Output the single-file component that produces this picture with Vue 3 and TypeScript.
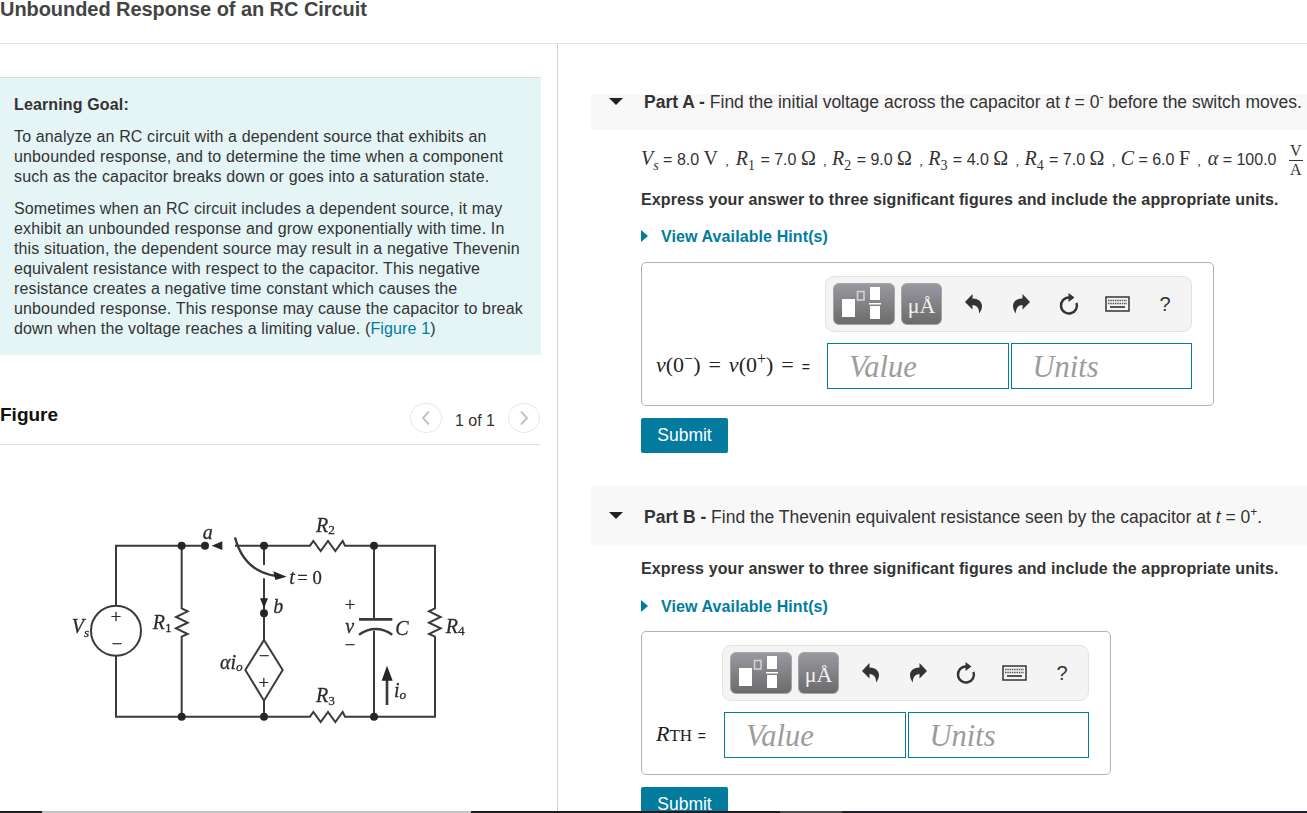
<script setup lang="ts">
interface Part { id: string; cls: string }
const parts: Part[] = [
  { id: 'A', cls: 'part-a' },
  { id: 'B', cls: 'part-b' },
]
</script>

<template>
  <div class="page">
    <header class="title-bar"><h1>Unbounded Response of an RC Circuit</h1></header>
    <main class="columns">
      <section class="left">
        <div class="goal">
          <h2>Learning Goal:</h2>
          <p>To analyze an RC circuit with a dependent source that exhibits an unbounded response, and to determine the time when a component such as the capacitor breaks down or goes into a saturation state.</p>
          <p>Sometimes when an RC circuit includes a dependent source, it may exhibit an unbounded response and grow exponentially with time. In this situation, the dependent source may result in a negative Thevenin equivalent resistance with respect to the capacitor. This negative resistance creates a negative time constant which causes the unbounded response. This response may cause the capacitor to break down when the voltage reaches a limiting value. (<span class="link">Figure 1</span>)</p>
        </div>
        <div class="fig-head">
          <h2>Figure</h2>
          <div class="pager">
            <span class="pg-btn"><svg width="10" height="16" viewBox="0 0 10 16"><path d="M8 1.5 2 8l6 6.5" fill="none" stroke="#c4c4c4" stroke-width="2"/></svg></span>
            <span class="pg-text">1 of 1</span>
            <span class="pg-btn"><svg width="10" height="16" viewBox="0 0 10 16"><path d="M2 1.5 8 8l-6 6.5" fill="none" stroke="#c4c4c4" stroke-width="2"/></svg></span>
          </div>
        </div>
        <div class="figure">
          <svg class="circuit" width="420" height="240" viewBox="0 0 1260 720">
            <g fill="none" stroke="#3a3a3a" stroke-width="6">
              <path d="M168 318V137H430M525 137H750l10-14 22 30 22-30 22 30 22-30 7 14H1125V325l-18 9 35 17-35 17 35 17-35 17 18 8V650H855l-7-14-22 30-22-30-22 30-22-30-10 14H168V468"/>
              <path d="M365 137V325l18 9-35 17 35 17-35 17 35 17-18 8V650"/>
              <path d="M612 137V195M612 235V420M612 602V650"/>
              <path d="M942 137V357M942 392V650"/>
              <circle cx="168" cy="392" r="75"/>
              <path d="M612 420 668 510 612 602 556 510Z"/>
              <path d="M525 112Q552 215 650 228" stroke-width="7"/>
              <path d="M897 358H997" stroke-width="8"/>
              <path d="M897 404Q947 370 997 404" stroke-width="7"/>
              <path d="M981 615V540" stroke-width="8"/>
            </g>
            <g fill="#262626">
              <circle cx="365" cy="137" r="12"/><circle cx="435" cy="137" r="12"/><circle cx="612" cy="137" r="12"/>
              <circle cx="942" cy="137" r="12"/><circle cx="612" cy="340" r="12"/><circle cx="365" cy="650" r="12"/>
              <circle cx="612" cy="650" r="12"/><circle cx="942" cy="650" r="12"/>
              <path d="M455 137 487 124V150Z"/>
              <path d="M600 295H624L612 325Z"/>
              <path d="M965 542 981 497 998 542Z"/>
              <path d="M680 230 640 214 646 240Z"/>
            </g>
            <g class="lbl">
              <text x="428" y="116">a</text>
              <text x="768" y="95">R<tspan class="sm" dy="8">2</tspan></text>
              <text x="768" y="607">R<tspan class="sm" dy="8">3</tspan></text>
              <text x="278" y="388">R<tspan class="sm" dy="8">1</tspan></text>
              <text x="1157" y="398">R<tspan class="sm" dy="8">4</tspan></text>
              <text x="35" y="398">V<tspan class="sm it" dy="12">s</tspan></text>
              <text x="688" y="252">t</text>
              <text x="640" y="340">b</text>
              <text x="856" y="398">v</text>
              <text x="1006" y="406">C</text>
              <text x="480" y="506">αi<tspan class="sm it" dy="8">o</tspan></text>
              <text x="1002" y="590">i<tspan class="sm it" dy="8">o</tspan></text>
            </g>
            <g class="sym">
              <text x="712" y="252">= 0</text>
              <text x="870" y="332" text-anchor="middle">+</text>
              <text x="870" y="454" text-anchor="middle">−</text>
              <text x="168" y="370" text-anchor="middle">+</text>
              <text x="171" y="450" text-anchor="middle">−</text>
              <text x="613" y="486" text-anchor="middle">−</text>
              <text x="611" y="566" text-anchor="middle">+</text>
            </g>
          </svg>
        </div>
      </section>

      <section class="right">
        <article v-for="part in parts" :key="part.id" :class="['part', part.cls]">
          <div class="part-head">
            <span class="caret"></span>
            <div class="part-title" v-if="part.id === 'A'"><b>Part A -</b> Find the initial voltage across the capacitor at <i>t</i> = 0<sup>-</sup> before the switch moves.</div>
            <div class="part-title" v-else><b>Part B -</b> Find the Thevenin equivalent resistance seen by the capacitor at <i>t</i> = 0<sup>+</sup>.</div>
          </div>
          <div class="part-body">
            <div class="params" v-if="part.id === 'A'">
              <span class="m"><i>V<sub>s</sub></i></span> = 8.0 <span class="m">V</span> <span class="c c-first">,</span>
              <span class="m"><i>R</i><sub>1</sub></span> = 7.0 <span class="m">Ω</span> <span class="c">,</span>
              <span class="m"><i>R</i><sub>2</sub></span> = 9.0 <span class="m">Ω</span> <span class="c">,</span>
              <span class="m"><i>R</i><sub>3</sub></span> = 4.0 <span class="m">Ω</span> <span class="c">,</span>
              <span class="m"><i>R</i><sub>4</sub></span> = 7.0 <span class="m">Ω</span> <span class="c">,</span>
              <span class="m"><i>C</i></span> = 6.0 <span class="m">F</span> <span class="c c-last">,</span>
              <span class="m"><i>α</i></span> = 100.0
              <span class="frac"><span>V</span><span class="den">A</span></span>
            </div>
            <p class="express">Express your answer to three significant figures and include the appropriate units.</p>
            <div class="hint"><span class="hint-caret"></span>View Available Hint(s)</div>
            <div class="answer">
              <div class="toolbar">
                <span class="tb-btn tb-tpl">
                  <svg width="62" height="42" viewBox="0 0 62 42">
                    <rect x="9" y="16" width="13" height="18" fill="#fff"/>
                    <rect x="24.500" y="8.500" width="6.500" height="8.500" fill="none" stroke="#d5d5d5" stroke-width="1.500"/>
                    <rect x="37" y="4" width="10" height="13" fill="#fff"/>
                    <rect x="36" y="20" width="12" height="1.500" fill="#fff"/>
                    <rect x="37" y="23" width="10" height="13" fill="#fff"/>
                  </svg>
                </span>
                <span class="tb-btn tb-unit">μÅ</span>
                <span class="tool"><svg width="17" height="20" viewBox="0 0 17 20"><path d="M0 8 7.500 0V4.500C13 4.500 17 7.500 17 12 17 15 15.500 17.500 14 19.500 14.500 15 12 11 7.500 11V15.500Z" fill="#333"/></svg></span>
                <span class="tool flip"><svg width="17" height="20" viewBox="0 0 17 20"><path d="M0 8 7.500 0V4.500C13 4.500 17 7.500 17 12 17 15 15.500 17.500 14 19.500 14.500 15 12 11 7.500 11V15.500Z" fill="#333"/></svg></span>
                <span class="tool"><svg width="22" height="24" viewBox="0 0 22 24"><path d="M11 5.500A8 8 0 1 0 18.500 10.800" fill="none" stroke="#333" stroke-width="2.400"/><path d="M10.500 1 16.500 5.500 10.500 10Z" fill="#333"/></svg></span>
                <span class="tool"><svg width="25" height="16" viewBox="0 0 25 16"><rect x="1" y="1" width="23" height="14" fill="#f4f4f4" stroke="#333" stroke-width="1.500"/><path d="M3 4.500h19M3 7.500h19" stroke="#555" stroke-width="1.500" stroke-dasharray="1.500 .8"/><path d="M5 11h15" stroke="#555" stroke-width="2"/></svg></span>
                <span class="tool tool-q">?</span>
              </div>
              <div class="answer-row">
                <div class="ans-label" v-if="part.id === 'A'"><i>v</i>(0<sup>−</sup>) = <i>v</i>(0<sup>+</sup>) = <span class="eq">=</span></div>
                <div class="ans-label" v-else><i>R</i><span class="th">TH</span> <span class="eq">=</span></div>
                <div class="inputs">
                  <input class="ans-input" type="text" placeholder="Value" />
                  <input class="ans-input" type="text" placeholder="Units" />
                </div>
              </div>
            </div>
            <button class="submit" type="button">Submit</button>
          </div>
        </article>
      </section>
    </main>
    <footer class="edge">
      <span class="e1"></span><span class="e2"></span><span class="e3"></span><span class="e4"></span><span class="e5"></span>
    </footer>
  </div>
</template>

<style>
html, body { margin: 0; background: #fff; }
</style>

<style scoped>
.page {
  width: 1307px; height: 813px; overflow: hidden; display: flex; flex-direction: column;
  font-family: "Liberation Sans", Arial, sans-serif; font-size: 16px; line-height: 20px; color: #333; background: #fff;
}
.title-bar { height: 43px; flex: none; border-bottom: 1px solid #e2e2e2; }
.title-bar h1 { margin: 0; font-size: 20px; line-height: 18px; font-weight: 700; color: #444; letter-spacing: -0.06px; }
.columns { flex: 1; min-height: 0; display: flex; overflow: hidden; }
.left { width: 557px; flex: none; border-right: 1px solid #c5d3e5; }
.goal { width: 541px; box-sizing: border-box; margin-top: 33px; height: 278px; padding: 17px 14px 0; background: #e5f5f6; border-top: 1px solid #ddd; letter-spacing: 0.14px; }
.goal h2 { margin: 0 0 12px; font-size: 16px; line-height: 20px; font-weight: 700; }
.goal p { margin: 0 0 12px; }
.link { color: #007c9e; }
.fig-head { width: 540px; height: 90px; box-sizing: border-box; border-bottom: 1px solid #e0e0e0; display: flex; justify-content: space-between; padding-top: 48px; }
.fig-head h2 { margin: 0; font-size: 19px; line-height: 24px; color: #111; font-weight: 700; }
.pager { display: flex; align-items: flex-start; }
.pg-btn { width: 30px; height: 28px; border: 1px solid #e8e8e8; border-radius: 50%; display: flex; align-items: center; justify-content: center; }
.pg-text { margin: 8px 13px 0; }
.figure { padding: 55px 0 0 60px; }
.circuit { display: block; filter: blur(0.5px); }
.lbl text { font: italic 60px "Liberation Serif", serif; fill: #2b2b2b; stroke: #2b2b2b; stroke-width: 0.8px; }
.lbl .sm { font-size: 40px; font-style: normal; }
.lbl .it { font-style: italic; }
.sym text { font: 56px "Liberation Serif", serif; fill: #2b2b2b; stroke: #2b2b2b; stroke-width: 0.8px; }

.right { flex: 1; min-width: 0; padding: 50px 0 0 33px; }
.part-head { position: relative; background: #f8f8f8; padding-left: 53px; box-sizing: border-box; }
.caret { position: absolute; left: 18px; width: 0; height: 0; border-left: 7px solid transparent; border-right: 7px solid transparent; border-top: 7px solid #222; }
.part-title { white-space: nowrap; font-size: 17.5px; }
.part-title sup { font-size: 12px; line-height: 0; }
.part-a .part-head { height: 36px; }
.part-a .part-title { line-height: 16px; }
.part-a .caret { top: 4px; }
.part-b { margin-top: 32px; }
.part-b .part-head { height: 60px; padding-top: 22px; }
.part-b .caret { top: 27px; }
.part-body { padding-left: 50px; }
.params { margin-top: 8px; height: 40px; line-height: 40px; white-space: nowrap; font-size: 16px; color: #333; }
.m { font-family: "Liberation Serif", serif; font-size: 20px; }
.m sub { font-size: 14px; line-height: 0; }
.m > sub { margin-right: 1px; }
.c { font-family: "Liberation Serif", serif; font-size: 13px; margin: 0 5.5px 0 3px; }
.c-first { margin-right: 7px; }
.c-last { margin-right: 7px; }
.frac { display: inline-flex; flex-direction: column; align-items: center; vertical-align: middle; font-family: "Liberation Serif", serif; font-size: 16px; line-height: 18px; margin-left: 8px; }
.den { border-top: 1px solid #333; padding: 0 1px; }
.express { margin: 12px 0 0; font-weight: 700; letter-spacing: 0.12px; }
.part-b .express { margin-top: 14px; }
.hint { margin-top: 17px; color: #007c9e; font-weight: 700; display: flex; align-items: center; letter-spacing: 0.1px; }
.part-b .hint { margin-top: 18px; }
.hint-caret { width: 0; height: 0; border-top: 6px solid transparent; border-bottom: 6px solid transparent; border-left: 7px solid #007c9e; margin-right: 13px; margin-top: -3px; }
.answer { margin-top: 16px; box-sizing: border-box; height: 144px; padding: 13px 21px 0 14px; border: 1px solid #b3b3b3; border-radius: 5px; display: flex; flex-direction: column; }
.part-a .answer { width: 573px; margin-top: 15px; }
.part-b .answer { width: 470px; margin-top: 14px; }
.toolbar { align-self: flex-end; width: 367px; height: 56px; box-sizing: border-box; border: 1px solid #e3e3e3; border-radius: 9px; background: #f4f4f4; display: flex; align-items: center; padding-left: 7px; }
.tb-btn { height: 42px; box-sizing: border-box; border: 1px solid #a5a5a5; border-radius: 6px; background: linear-gradient(#9a98a0, #6b6b6b); display: flex; align-items: center; justify-content: center; flex: none; }
.tb-tpl { width: 62px; margin-right: 6px; }
.tb-tpl svg { margin: -1px; flex: none; }
.tb-unit { width: 41px; color: #f2f2f2; font: 22px "Liberation Serif", serif; padding-top: 4px; }
.tool { width: 48px; height: 42px; display: flex; align-items: center; justify-content: center; flex: none; }
.flip svg { transform: scaleX(-1); }
.tb-unit + .tool { margin-left: 7px; }
.tool-q { font-size: 20px; color: #333; }
.answer-row { display: flex; align-items: center; margin-top: 11px; justify-content: space-between; }
.ans-label { font-family: "Liberation Serif", serif; font-size: 22px; white-space: nowrap; color: #222; }
.part-a .ans-label { word-spacing: 2.5px; }
.ans-label sup { font-size: 16px; line-height: 0; }
.eq { font-family: "Liberation Sans", sans-serif; font-size: 14px; }
.th { font-size: 17px; }
.inputs { display: flex; gap: 2px; }
.ans-input { width: 181.5px; height: 46px; box-sizing: border-box; border: 1px solid #007c9e; border-radius: 0; padding: 2px 0 0 21px; margin: 0; outline: none; background: #fff; font: italic 30.5px "Liberation Serif", serif; color: #333; }
.ans-input::placeholder { color: #9c9c9c; opacity: 1; }
.submit { display: block; margin-top: 12px; width: 87px; height: 35px; border: 0; border-radius: 2px; background: #027b9e; color: #fff; font: 17.5px "Liberation Sans", sans-serif; padding: 0; }
.edge { height: 2px; flex: none; display: flex; }
.edge span { display: block; height: 100%; }
.e1 { width: 42px; background: #1e1e1e; }
.e2 { width: 429px; background: #c4c4c4; }
.e3 { width: 309px; background: #201c1c; }
.e4 { width: 62px; background: #4b4b4b; }
.e5 { flex: 1; background: #1f2126; }
</style>
